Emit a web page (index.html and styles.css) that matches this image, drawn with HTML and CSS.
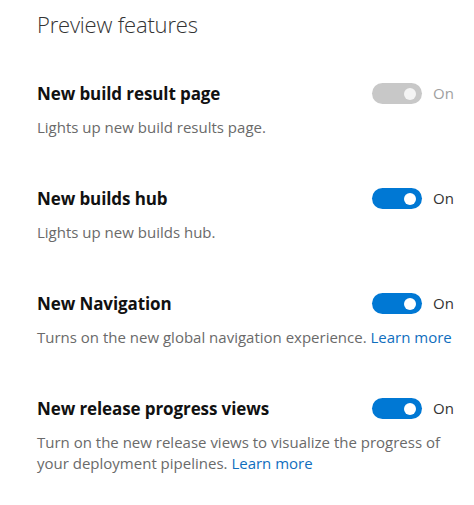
FILE: index.html
```html
<!DOCTYPE html>
<html>
<head>
<meta charset="utf-8">
<link rel="stylesheet" href="styles.css">
</head>
<body>
<div class="panel">
  <h1 class="title">Preview features</h1>
  <div class="feature">
    <div class="feature-head">
      <div class="feature-name">New build result page</div>
      <div class="toggle-wrap disabled">
        <span class="toggle"><span class="knob"></span></span>
        <span class="toggle-label">On</span>
      </div>
    </div>
    <div class="feature-desc">Lights up new build results page.</div>
  </div>
  <div class="feature">
    <div class="feature-head">
      <div class="feature-name">New builds hub</div>
      <div class="toggle-wrap">
        <span class="toggle"><span class="knob"></span></span>
        <span class="toggle-label">On</span>
      </div>
    </div>
    <div class="feature-desc">Lights up new builds hub.</div>
  </div>
  <div class="feature">
    <div class="feature-head">
      <div class="feature-name">New Navigation</div>
      <div class="toggle-wrap">
        <span class="toggle"><span class="knob"></span></span>
        <span class="toggle-label">On</span>
      </div>
    </div>
    <div class="feature-desc">Turns on the new global navigation experience. <a class="link" href="#">Learn more</a></div>
  </div>
  <div class="feature">
    <div class="feature-head">
      <div class="feature-name">New release progress views</div>
      <div class="toggle-wrap">
        <span class="toggle"><span class="knob"></span></span>
        <span class="toggle-label">On</span>
      </div>
    </div>
    <div class="feature-desc">Turn on the new release views to visualize the progress of your deployment pipelines. <a class="link" href="#">Learn more</a></div>
  </div>
</div>
</body>
</html>
```
FILE: styles.css
```css
html, body {
  margin: 0;
  padding: 0;
  background: #ffffff;
}
body {
  font-family: "Open Sans", "Noto Sans", sans-serif;
  color: #000;
}
.panel {
  width: 418px;
  padding: 8px 0 0 37px;
}
.title {
  margin: 0;
  font-size: 22px;
  font-weight: 300;
  color: #333;
  line-height: 32px;
  letter-spacing: -0.2px;
}
.feature {
  margin-top: 39px;
}
.feature + .feature {
  margin-top: 46px;
}
.feature-head {
  display: flex;
  align-items: center;
  justify-content: space-between;
  height: 28px;
}
.feature-name {
  font-size: 17px;
  font-weight: 700;
  color: #111;
  letter-spacing: -0.1px;
}
.toggle-wrap {
  display: flex;
  align-items: center;
  gap: 11px;
}
.toggle {
  position: relative;
  display: block;
  width: 50px;
  height: 21px;
  border-radius: 11px;
  background: #0078d4;
}
.knob {
  position: absolute;
  right: 6px;
  top: 5px;
  width: 12px;
  height: 12px;
  border-radius: 50%;
  background: #fff;
}
.toggle-label {
  font-size: 15px;
  color: #333;
  width: 22px;
}
.disabled .toggle {
  background: #c8c8c8;
}
.disabled .knob {
  background: #f4f4f4;
}
.disabled .toggle-label {
  color: #a0a0a0;
}
.feature-desc {
  margin-top: 10px;
  font-size: 15px;
  line-height: 21px;
  color: #6a6a6a;
}
.link {
  color: #106ebe;
  text-decoration: none;
}
```
